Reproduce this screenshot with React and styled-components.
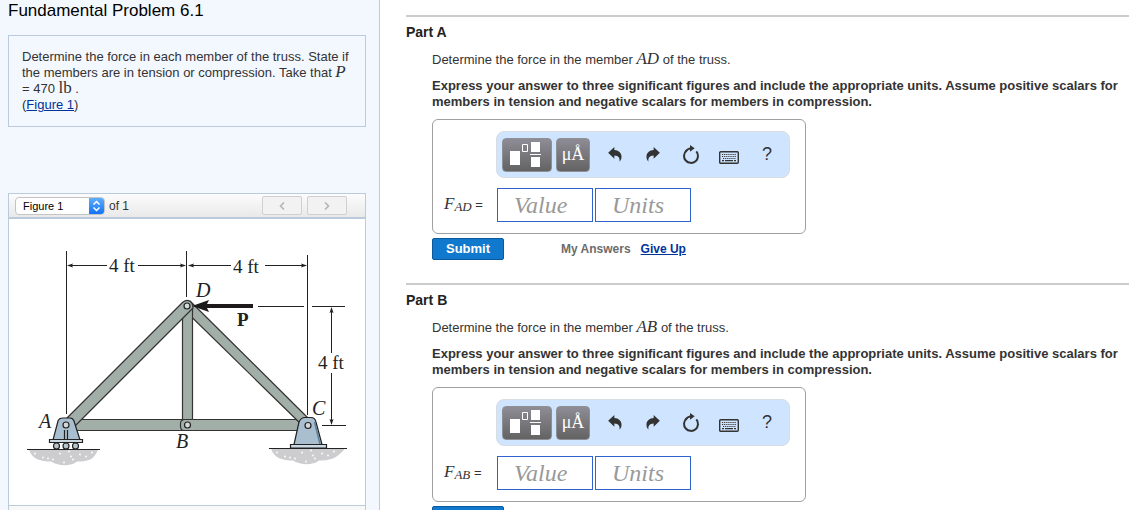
import React, { Fragment } from 'react';

import styled, { createGlobalStyle } from 'styled-components';

const GlobalStyle = createGlobalStyle`
  * {
    box-sizing: border-box;
  }

  body {
    margin: 0;
    background: #fff;
    color: #333;
    font: 13px/16px 'Liberation Sans', Arial, sans-serif;
  }

  button, input, select {
    font-family: inherit;
    margin: 0;
  }

  p, h1, h2 {
    margin: 0;
  }
`;

const Page = styled.div`
  display: grid;
  grid-template-columns: 380px minmax(0, 1fr);
  height: 100vh;
  overflow: hidden;
`;

const Sidebar = styled.aside`
  padding: 0 13px 0 8px;
  background: #f3f8ff;
  border-right: 1px solid #b9cbdd;
`;

const Title = styled.h1`
  padding: 1px 0 14px;
  color: #000;
  font-size: 17px;
  font-weight: normal;
  line-height: 20px;
`;

const Statement = styled.section`
  margin-bottom: 66px;
  padding: 13px;
  border: 1px solid #b9cbdd;
`;

const Line = styled.p`
  white-space: nowrap;
`;

const Var = styled.i`
  font-family: 'Liberation Serif', serif;
  font-size: 17px;
  line-height: 0;
`;

const Unit = styled.span`
  font-family: 'Liberation Serif', serif;
  font-size: 17px;
  line-height: 0;
`;

const Link = styled.a`
  color: #003399;
  text-decoration: underline;
`;

const FigurePanel = styled.section`
  background: #fff;
  border: 1px solid #b9cbdd;
`;

const FigureBar = styled.header`
  display: flex;
  align-items: center;
  gap: 4px;
  height: 25px;
  padding: 0 18px 0 6px;
  background: linear-gradient(#fcfcfc, #e9e9e9);
  border-bottom: 2px solid #b9cbdd;
`;

const SelectBox = styled.div`
  display: grid;
  grid-template-columns: 1fr 15px;
  width: 90px;
  height: 18px;
  border: 1px solid #c4c4c4;
  border-radius: 4px;
  background: #fff;
  overflow: hidden;
`;

const Select = styled.select`
  grid-area: 1 / 1 / 2 / 3;
  appearance: none;
  padding: 0 7px;
  border: none;
  background: transparent;
  color: #000;
  font-size: 11px;
`;

const SelectArrows = styled.svg`
  grid-area: 1 / 2;
  width: 15px;
  height: 16px;
  background: linear-gradient(#5fadfb, #1273f8);
  pointer-events: none;
`;

const Count = styled.span`
  flex: 1;
  font-size: 12px;
`;

const PagerButton = styled.button`
  display: flex;
  align-items: center;
  justify-content: center;
  width: 40px;
  height: 19px;
  padding: 0;
  border: 1px solid #d0d0d0;
  border-radius: 2px;
  background: #f2f2f2;

  & + & {
    margin-left: 1px;
  }
`;

const Drawing = styled.svg`
  display: block;
  width: 100%;
  font-family: 'Liberation Serif', serif;
  font-size: 20px;
`;

const FigureFoot = styled.footer`
  height: 25px;
  background: #f8f8f8;
  border-top: 1px solid #b9cbdd;
`;

const Main = styled.main`
  padding: 15px 0 0 26px;
`;

const PartSection = styled.section`
  padding-bottom: 23px;
  border-top: 2px solid #ccc;
`;

const PartTitle = styled.h2`
  padding: 7px 0 12px;
  color: #222;
  font-size: 14px;
  line-height: 16px;
`;

const PartBody = styled.div`
  padding-left: 26px;
`;

const Instructions = styled.p`
  padding: 10px 0 9px;
  font-weight: bold;
`;

const AnswerBox = styled.form`
  width: 374px;
  padding: 11px 15px 11px 11px;
  border: 1px solid #a0a0a0;
  border-radius: 6px;
`;

const Toolbar = styled.div`
  display: flex;
  align-items: center;
  height: 47px;
  margin: 0 0 10px 52px;
  padding: 0 3px 0 5px;
  border: 1px solid #d8dde2;
  border-radius: 8px;
  background: #cfe5ff;
`;

const Pads = styled.div`
  display: flex;
  gap: 4px;
  margin-right: 6px;
`;

const PadButton = styled.button`
  display: flex;
  align-items: center;
  justify-content: center;
  width: ${({ $width }) => $width}px;
  height: 34px;
  padding: 0;
  border: 1px solid #8f8f96;
  border-radius: 4px;
  background: linear-gradient(#8e8c95, #636363);
  color: #fff;
  font-family: 'Liberation Serif', serif;
  font-size: 18px;
`;

const ToolButton = styled.button`
  display: flex;
  align-items: center;
  justify-content: center;
  width: 38px;
  height: 34px;
  padding: 0;
  border: none;
  background: none;
  color: #333;
  font-size: 18px;
`;

const AnswerRow = styled.div`
  display: flex;
  align-items: center;
  gap: 2px;
`;

const AnswerLabel = styled.label`
  width: 51px;
  white-space: nowrap;
`;

const Sub = styled.i`
  position: relative;
  top: 2px;
  font-family: 'Liberation Serif', serif;
  font-size: 13px;
  line-height: 0;
`;

const Field = styled.input`
  width: 96px;
  height: 34px;
  padding: 0 16px;
  border: 1px solid #2f63cf;
  background: #fff;
  color: #333;
  font: italic 24px 'Liberation Serif', serif;
  outline: none;

  &::placeholder {
    color: #999;
    opacity: 1;
  }
`;

const Actions = styled.div`
  display: flex;
  align-items: center;
  gap: 10px;
  padding-top: 4px;
  font-size: 12px;
  font-weight: bold;
`;

const Submit = styled.button`
  width: 72px;
  height: 22px;
  margin-right: 47px;
  padding: 0;
  border: 1px solid #0b5a9b;
  border-radius: 2px;
  background: #1079cd;
  color: #fff;
  font-size: 13px;
  font-weight: bold;
  line-height: 18px;
`;

const MutedLink = styled.a`
  color: #6c6c6c;
  text-decoration: none;
`;

const parts = [
  { id: 'A', member: 'AD' },
  { id: 'B', member: 'AB' },
];

const Pin = ({ x, y }) => (
  <circle cx={x} cy={y} r="3" fill="#d5d8d8" stroke="#222" strokeWidth="1.2" />
);

const Arrow = ({ x, y, angle = 0 }) => (
  <path d="M0 0 L-6 -2 L-5 0 L-6 2 Z" fill="#222" transform={`translate(${x} ${y}) rotate(${angle})`} />
);

const Ground = ({ x, y, width }) => (
  <g transform={`translate(${x} ${y})`}>
    <path
      d={`M2 0 C5 10 14 12 24 12 C32 17 44 17 50 12 C60 12 67 11 ${width - 2} 0 Z`}
      fill="#cdcdcf"
    />
    <g fill="#fff">
      {[[8, 4], [16, 8], [21, 9], [26, 10], [33, 4], [37, 13], [44, 7], [46, 10], [53, 5], [59, 7], [42, 2], [65, 3]].map(
        ([cx, cy]) => (
          <circle key={cx} cx={cx} cy={cy} r="0.9" />
        )
      )}
    </g>
    <path d={`M0 0 H${width}`} stroke="#222" strokeWidth="1.2" />
  </g>
);

const Truss = () => (
  <Drawing viewBox="9 219 356 286" role="img" aria-label="Truss A B C D">
    <g stroke="#333" strokeWidth="1.2" strokeLinejoin="round" fill="#a2aea8">
      <path d="M72 419.5 H308 V430.5 H72 Z" />
      <path d="M190 301 L308 418 L304 427 L186 311.500 Z" />
      <path d="M182.5 312 V419.5 H192.5 V306 Z" />
      <path d="M64 421 L183 302 C188 298 193 302 193 308 L74 427 Z" />
      <path d="M192.500 419.500 H184 Q180.500 420 180.500 424 V427 Q181 430.500 184 430.500 H192.500" />
    </g>
    <Ground x={27} y={449.5} width={73} />
    <Ground x={269} y={448.5} width={78} />
    <g stroke="#222" strokeWidth="1.2">
      <path d="M53 440 L58 421 Q59 418 63 418 H70 Q73 418 74 421 L80 440 Z" fill="#a9bfd0" />
      <path d="M64.500 430 V440 M67.500 430 V440" fill="none" />
      <path d="M49.500 439.500 H82.500 V442.500 H49.500 Z" fill="#cddae4" />
      <circle cx="56.500" cy="446" r="3" fill="#b9c5cd" />
      <circle cx="66" cy="446" r="3" fill="#b9c5cd" />
      <circle cx="75.500" cy="446" r="3" fill="#b9c5cd" />
      <path d="M294 444.500 L299 422 Q301 417.500 305 417.500 H311 Q315 417.500 316 422 L322 444.500 Z" fill="#a9bfd0" />
      <path d="M290.500 444.500 H326.500 V448 H290.500 Z" fill="#cddae4" />
    </g>
    <path d="M314.500 422 L320 444" stroke="#5f8299" strokeWidth="1.5" />
    <Pin x={66} y={425} />
    <Pin x={187} y={306} />
    <Pin x={187.5} y={425} />
    <Pin x={308} y={425.5} />
    <g stroke="#222" strokeWidth="1" fill="none">
      <path d="M66.500 251 V414 M186.500 251 V297 M307.500 255 V415" />
      <path d="M68 265.500 H107 M138 265.500 H185 M189 265.500 H231 M265 265.500 H306" />
      <path d="M258 306.500 H304 M312 306.500 H345 M322 425.500 H346" />
      <path d="M331.500 308 V353 M331.500 373 V424" />
    </g>
    <Arrow x={67} y={265.5} angle={180} />
    <Arrow x={186} y={265.5} />
    <Arrow x={188} y={265.5} angle={180} />
    <Arrow x={307} y={265.5} />
    <Arrow x={331.5} y={307} angle={-90} />
    <Arrow x={331.5} y={425} angle={90} />
    <path d="M253 304 V308 H207 L209 312 L192 306 L209 300 L207 304 Z" fill="#1c1a1b" />
    <g fill="#222">
      <text x="109" y="272" fontSize="19">4 ft</text>
      <text x="233" y="273" fontSize="19">4 ft</text>
      <text x="318" y="369" fontSize="19">4 ft</text>
      <text x="237" y="326" fontWeight="bold" fontSize="19">P</text>
      <g fontStyle="italic">
        <text x="39" y="428">A</text>
        <text x="176" y="448">B</text>
        <text x="312" y="415">C</text>
        <text x="196" y="297">D</text>
      </g>
    </g>
  </Drawing>
);

const TemplatesIcon = () => (
  <svg width="34" height="28" viewBox="0 0 34 28" fill="#fff">
    <path d="M0 10 H10 V24 H0 Z M21 1 H30 V11 H21 Z M21 16 H30 V26 H21 Z M20 13 H31 V14 H20 Z" />
    <path d="M12.500 3.500 H17.500 V10.500 H12.500 Z" fill="none" stroke="#fff" />
  </svg>
);

const UndoIcon = ({ flip }) => (
  <svg width="14" height="15" viewBox="0 0 42 46" fill="currentColor">
    <path
      transform={flip ? 'translate(42 0) scale(-1 1)' : undefined}
      d="M0 18 L19 0 V9 C32 10 41 17 41 30 C41 36 39 41 35 45 C36 34 33 27 19 26 V36 Z"
    />
  </svg>
);

const ResetIcon = () => (
  <svg width="18" height="20" viewBox="0 0 54 60">
    <path d="M13 17 A21 21 0 1 0 43 19" fill="none" stroke="currentColor" strokeWidth="6" />
    <path d="M24 0 L38 10 L24 20 Z" fill="currentColor" />
    <path d="M11 20 Q17 11 27 10" fill="none" stroke="currentColor" strokeWidth="6" />
  </svg>
);

const KeyboardIcon = () => (
  <svg width="20" height="18" viewBox="0 -5 20 18" fill="none" stroke="currentColor">
    <rect x="0.700" y="0.700" width="18.600" height="11.600" rx="1" strokeWidth="1.400" />
    <path d="M3 3.500 H17 M3 5.500 H17 M4 7.500 H17" strokeDasharray="1.200 0.900" strokeWidth="1.100" />
    <path d="M3 9.700 H5 M6 9.700 H14 M15 9.700 H17" strokeWidth="1.200" />
  </svg>
);

const Part = ({ id, member }) => (
  <PartSection>
    <PartTitle>Part {id}</PartTitle>
    <PartBody>
      <Line>
        Determine the force in the member <Var>{member}</Var> of the truss.
      </Line>
      <Instructions>
        Express your answer to three significant figures and include the appropriate units. Assume positive scalars for
        members in tension and negative scalars for members in compression.
      </Instructions>
      <AnswerBox>
        <Toolbar>
          <Pads>
            <PadButton type="button" $width={50} aria-label="Templates">
              <TemplatesIcon />
            </PadButton>
            <PadButton type="button" $width={34}>
              μÅ
            </PadButton>
          </Pads>
          <ToolButton type="button" aria-label="Undo">
            <UndoIcon />
          </ToolButton>
          <ToolButton type="button" aria-label="Redo">
            <UndoIcon flip />
          </ToolButton>
          <ToolButton type="button" aria-label="Reset">
            <ResetIcon />
          </ToolButton>
          <ToolButton type="button" aria-label="Keyboard">
            <KeyboardIcon />
          </ToolButton>
          <ToolButton type="button">?</ToolButton>
        </Toolbar>
        <AnswerRow>
          <AnswerLabel htmlFor={`value${id}`}>
            <Var>F</Var>
            <Sub>{member}</Sub> =
          </AnswerLabel>
          <Field type="text" id={`value${id}`} placeholder="Value" />
          <Field type="text" aria-label="Units" placeholder="Units" />
        </AnswerRow>
      </AnswerBox>
      <Actions>
        <Submit type="button">Submit</Submit>
        <MutedLink href="#answers">My Answers</MutedLink>
        <Link href="#giveup">Give Up</Link>
      </Actions>
    </PartBody>
  </PartSection>
);

const App = () => {
  return (
    <Fragment>
      <GlobalStyle />
      <Page>
        <Sidebar>
          <Title>Fundamental Problem 6.1</Title>
          <Statement>
            <Line>Determine the force in each member of the truss. State if</Line>
            <Line>
              the members are in tension or compression. Take that <Var>P</Var>
            </Line>
            <Line>
              = 470 <Unit>lb</Unit> .
            </Line>
            <Line>
              (<Link href="#figure">Figure 1</Link>)
            </Line>
          </Statement>
          <FigurePanel id="figure">
            <FigureBar>
              <SelectBox>
                <Select aria-label="Figure">
                  <option>Figure 1</option>
                </Select>
                <SelectArrows viewBox="0 0 15 16" fill="none" stroke="#fff" strokeWidth="1.5">
                  <path d="M4.500 6.500 L7.500 3.500 L10.500 6.500 M4.500 9.500 L7.500 12.500 L10.500 9.500" />
                </SelectArrows>
              </SelectBox>
              <Count>of 1</Count>
              <PagerButton type="button" aria-label="Previous figure">
                <svg width="6" height="8" fill="none" stroke="#b5b5b5" strokeWidth="1.600">
                  <path d="M5 0.500 L1.500 4 L5 7.500" />
                </svg>
              </PagerButton>
              <PagerButton type="button" aria-label="Next figure">
                <svg width="6" height="8" fill="none" stroke="#b5b5b5" strokeWidth="1.600">
                  <path d="M1 0.500 L4.500 4 L1 7.500" />
                </svg>
              </PagerButton>
            </FigureBar>
            <Truss />
            <FigureFoot />
          </FigurePanel>
        </Sidebar>
        <Main>
          {parts.map((part) => (
            <Part key={part.id} id={part.id} member={part.member} />
          ))}
        </Main>
      </Page>
    </Fragment>
  );
};

export default App;
